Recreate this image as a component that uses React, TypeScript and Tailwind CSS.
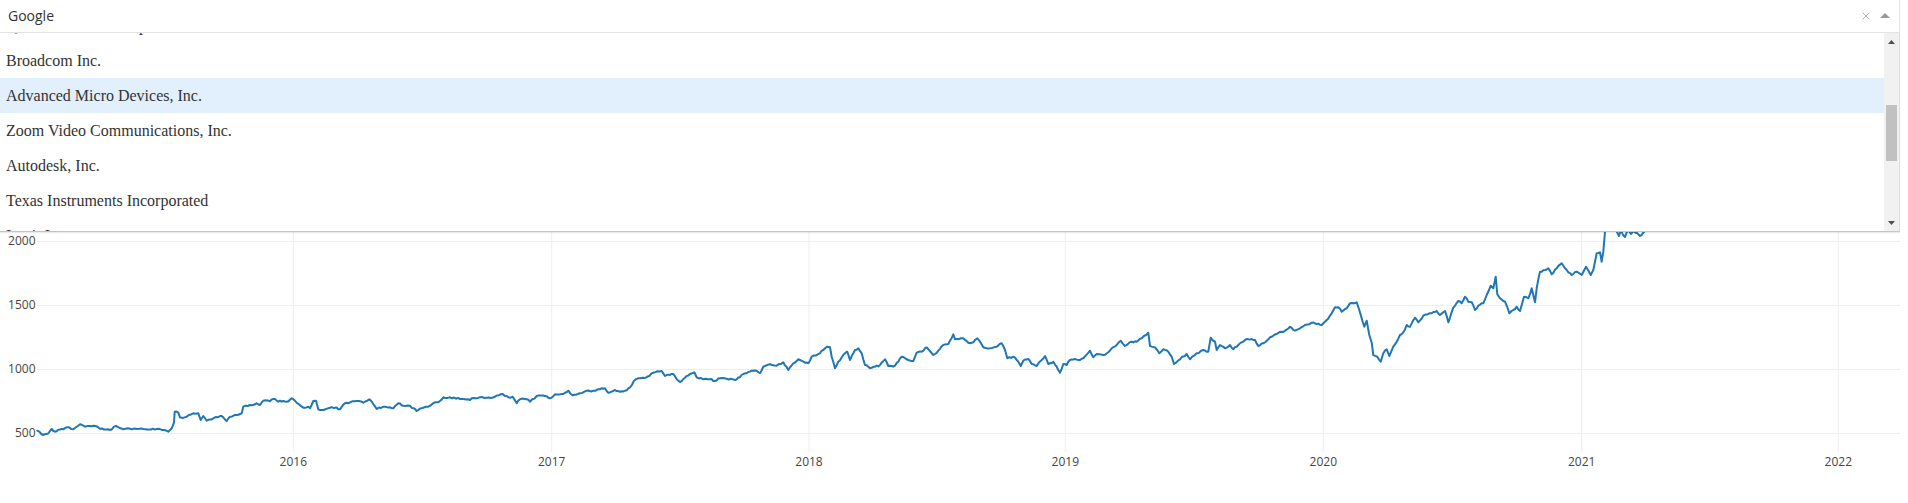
import React from "react";

const RAW: [number, number][] = [
  [37.3, 430.7], [43.3, 435], [48.3, 433.3], [51.7, 429], [55, 431.7], [58.3, 429.7], [63.3, 429.3], [66.7, 427.3],
  [73.3, 429.3], [80, 424.3], [85, 426.7], [93.3, 425.7], [100, 428.7], [110, 430], [116, 426], [123.3, 429.3],
  [130, 428.7], [143.3, 429], [156.7, 429], [161.7, 430], [168.3, 431.7], [171.7, 428.3], [174, 422.7], [174.7, 411.7],
  [178.3, 412.7], [180, 417.3], [186.7, 416.7], [193.3, 413.3], [198.3, 413.3], [200.7, 420], [203.3, 416], [206.7, 420.7],
  [213.3, 418.3], [220, 416], [223.3, 417.3], [226.7, 421], [230, 416.7], [236.7, 415], [241.7, 413.3], [243.3, 406.7],
  [250, 405], [256.7, 403.3], [260, 405], [263.3, 400.7], [270, 401.3], [273.3, 399], [278.3, 401.7], [283.3, 401],
  [286.7, 401.7], [291.7, 398.3], [296.7, 402.7], [303.3, 407.7], [308.3, 406.7], [310, 408.3], [313.3, 401], [316, 400.7],
  [318.3, 409.3], [323.3, 410], [330, 407.7], [335, 407.7], [340, 409.3], [345, 403.3], [350, 402.3], [356.7, 401],
  [363.3, 402.7], [369.3, 399.3], [373.3, 404], [376.7, 409], [383.3, 406.7], [390, 407.3], [393.3, 408.3], [398.3, 403.3],
  [403.3, 405.7], [410, 405.7], [416.7, 411], [421.7, 408.3], [428.3, 406.7], [435, 402.3], [438.3, 402.3], [443.3, 397.3],
  [450, 397.3], [460, 399], [470, 400], [471.7, 398.3], [480, 397.3], [486.7, 397.7], [495, 396.7],
  [502.7, 394], [508.3, 397.3], [512.7, 396.7], [516.7, 403.3], [520, 399.3], [526.7, 399.3], [530, 401.7], [536.7, 396],
  [545, 396], [550, 398.3], [555, 394.3], [563.3, 394], [568.3, 390.7], [572.7, 395.3], [580, 393.3], [586.7, 390.7],
  [593.3, 390.7], [600, 389.3], [605, 388.3], [608.3, 392.7], [615, 390], [620, 391.7], [625, 390.7], [630, 387.3],
  [634, 380.7], [638.3, 378.3], [645, 378], [649.3, 376], [653.3, 372.7], [661.7, 371], [665, 376], [670, 375],
  [673.3, 374], [676.7, 379.3], [680, 382], [685, 377.7], [690, 374], [694.3, 372.3], [696.7, 377.3], [703.3, 379.3],
  [710, 379.3], [715, 381], [720, 378.3], [726.7, 378.7], [735, 380], [740, 377.3], [743.3, 374], [748.3, 372],
  [753.3, 370.7], [756.7, 370.7], [760, 373.3], [763.3, 366.7], [770, 364.3], [776.7, 365.7], [783.3, 362.3], [788.3, 370],
  [793.3, 363.3], [798.3, 359.3], [805, 362.7], [808.3, 363.3], [811.7, 356.7], [818.3, 354], [823.3, 350], [827.3, 346.7],
  [830, 347.3], [831.7, 356.7], [835, 368.3], [838.3, 361.7], [843.3, 355], [847.3, 351.7], [850, 360], [855, 350],
  [858.3, 348.3], [861.7, 353.3], [865, 365], [870, 368.3], [875, 366.7], [880, 365], [885, 359.3], [888.3, 366],
  [893.3, 366.7], [898.3, 361.7], [901.7, 356.7], [906.7, 359.3], [913.3, 361], [916.7, 352.7], [921.7, 351.7], [926.7, 347.3],
  [933.3, 355], [938.3, 350.7], [943.3, 345], [948.3, 344], [953.3, 334.3], [955, 339.3],
  [963.3, 338.3], [968.3, 342.7], [973.3, 342.3], [977.3, 338.3], [983.3, 347.3], [990, 348.3], [996.7, 346.7], [1001.7, 343.3],
  [1005, 350], [1007.3, 358.3], [1013.3, 356.7], [1016.7, 360], [1020.7, 366], [1023.3, 360.7], [1028.3, 359], [1031.7, 364],
  [1036.7, 366], [1041.7, 360], [1045, 356], [1048.3, 364], [1053.3, 361.7], [1056.7, 366.7], [1060, 372.7], [1063.3, 364],
  [1066.7, 365], [1070, 360], [1075, 359], [1078.3, 360], [1083.3, 358.3], [1090, 350.7], [1093.3, 357.3], [1096.7, 354],
  [1103.3, 355], [1108.3, 352.3], [1111.7, 348.3], [1116.7, 345], [1120.7, 340.7], [1125, 346], [1131.7, 341.7], [1136.7, 341.7],
  [1141.7, 338.3], [1148.3, 332.7], [1150, 346], [1155, 347.3], [1159.3, 353.3], [1163.3, 349.3], [1168.3, 351.7], [1171.7, 356.7],
  [1174, 364], [1180, 359.3], [1186.7, 354], [1190, 359.3], [1196.7, 353.3], [1203.3, 350], [1208.3, 351.7], [1210.7, 337.7],
  [1215, 341.7], [1216.7, 350], [1220, 345], [1225, 348.3], [1230, 345], [1233.3, 349.3], [1238.3, 345], [1245, 340],
  [1251.7, 339], [1255, 340], [1258.3, 346], [1263.3, 343.3], [1270, 337.3], [1276.7, 334], [1281.7, 331.7], [1285, 330.7],
  [1290, 326.7], [1295, 330.7], [1300, 328.3], [1305, 325], [1311.7, 322.7], [1316.7, 324], [1321.7, 325], [1326.7, 320],
  [1331.7, 313.3], [1335, 307.3], [1338.3, 307.3], [1341.7, 311.7], [1346.7, 308.3], [1350, 303.3], [1356.7, 302.3], [1359.3, 310],
  [1362.7, 321.7], [1364.3, 326.7], [1366.7, 320.7], [1369.3, 335], [1371.7, 342.7], [1373.3, 355], [1377.3, 356.7], [1380.7, 361.7],
  [1383.3, 353.3], [1386.7, 349.3], [1389.3, 356], [1393.3, 346.7], [1396.7, 341.7],
  [1400, 335], [1403.3, 332.3], [1406.7, 325], [1410, 326.7], [1415, 317.7], [1418.3, 322.3], [1423.3, 315.7], [1431.7, 313.3],
  [1436.7, 311], [1440, 315], [1445, 311], [1448.3, 322.3], [1453.3, 307.7], [1458.3, 301], [1461.7, 303.3], [1465, 296.7],
  [1468.3, 301.7], [1471.7, 302.3], [1475, 310], [1478.3, 305.7], [1483.3, 303.3], [1486.7, 295], [1490.7, 285.7], [1493.3, 288.3],
  [1495.7, 276.7], [1497.3, 294.3], [1500, 298.3], [1505, 301.7], [1509.3, 313.3], [1513.3, 310], [1516.7, 306.7], [1520, 311],
  [1524, 296.7], [1528.3, 298.3], [1531.7, 288.3], [1535, 302.3], [1536.7, 288.3], [1540, 271.7], [1545, 270], [1548.3, 268.3],
  [1551.7, 274.3], [1556.7, 268.3], [1561.7, 263.3], [1566.7, 270], [1571.7, 275], [1576.7, 271.7], [1581.7, 275], [1586, 266.7],
  [1590.7, 275], [1593.3, 270], [1596.7, 253.3], [1600, 252.3], [1601.7, 261.7], [1603.3, 251.7], [1605, 231.7], [1607, 222],
  [1610, 214], [1614, 222], [1617, 232], [1619, 236], [1621, 230], [1623, 235], [1625, 237], [1628, 230], [1631, 234],
  [1634, 231], [1637, 233], [1640, 236], [1643, 233], [1645, 231], [1647, 226],
];

function buildPoints(): string {
  let seed = 987654;
  const rnd = () => {
    seed = (seed * 1103515245 + 12345) & 0x7fffffff;
    return seed / 0x7fffffff;
  };
  const pts: string[] = [];
  for (let i = 0; i < RAW.length - 1; i++) {
    const [x0, y0] = RAW[i];
    const [x1, y1] = RAW[i + 1];
    const n = Math.max(1, Math.round((x1 - x0) / 2));
    for (let k = 0; k < n; k++) {
      const t = k / n;
      const x = x0 + (x1 - x0) * t;
      let y = y0 + (y1 - y0) * t;
      if (k > 0) y += (rnd() - 0.5) * 1.6;
      pts.push(`${x.toFixed(1)},${y.toFixed(1)}`);
    }
  }
  const last = RAW[RAW.length - 1];
  pts.push(`${last[0]},${last[1]}`);
  return pts.join(" ");
}

const YEARS: [string, number][] = [
  ["2016", 293.3],
  ["2017", 551.7],
  ["2018", 809],
  ["2019", 1065.3],
  ["2020", 1323.3],
  ["2021", 1581.7],
  ["2022", 1838.3],
];

const YTICKS: [string, number][] = [
  ["2000", 241],
  ["1500", 305],
  ["1000", 369],
  ["500", 433],
];

const OPTIONS = [
  "QUALCOMM Incorporated",
  "Broadcom Inc.",
  "Advanced Micro Devices, Inc.",
  "Zoom Video Communications, Inc.",
  "Autodesk, Inc.",
  "Texas Instruments Incorporated",
  "Intuit Inc.",
];

function Chart() {
  const points = buildPoints();
  return (
    <svg width={1900} height={437} viewBox="0 33 1900 437" className="block">
      {YTICKS.map(([, y]) => (
        <line key={"h" + y} x1={37} x2={1900} y1={y + 0.5} y2={y + 0.5} stroke="#eeeeee" strokeWidth={1} />
      ))}
      {YEARS.map(([, x]) => (
        <line key={"v" + x} x1={x} x2={x} y1={33} y2={452} stroke="#eeeeee" strokeWidth={1} />
      ))}
      <polyline points={points} fill="none" stroke="#1f77b4" strokeWidth={2} strokeLinejoin="round" strokeLinecap="round" />
      <g style={{ fontFamily: '"Open Sans", Verdana, Arial, sans-serif' }} fontSize={12} fill="#444444">
        {YTICKS.map(([t, y]) => (
          <text key={"yl" + t} x={35.5} y={y + 4.3} textAnchor="end">
            {t}
          </text>
        ))}
        {YEARS.map(([t, x]) => (
          <text key={"xl" + t} x={x} y={466} textAnchor="middle">
            {t}
          </text>
        ))}
      </g>
    </svg>
  );
}

export default function App() {
  return (
    <div className="relative w-[1900px] bg-white">
      <div className="flex h-[33px] w-[1900px] items-center border-b border-r border-[#e3e3e3] bg-white pl-[8px] pr-[9px]">
        <span className="flex-1 pb-[2px] font-['Open_Sans',Arial,sans-serif] text-[14px] text-[#333333]">Google</span>
        <svg width="8" height="8" viewBox="0 0 8 8" className="mr-[10px] mb-[1px]">
          <path d="M0.5 0.5 L7.5 7.5 M7.5 0.5 L0.5 7.5" stroke="#b5b5b5" strokeWidth="1" fill="none" />
        </svg>
        <svg width="10" height="5" viewBox="0 0 10 5" className="mb-[2px]">
          <path d="M0 5 L5 0 L10 5 Z" fill="#999999" />
        </svg>
      </div>

      <div className="absolute left-0 top-[33px] z-10 flex h-[199px] w-[1900px] border-b border-r border-b-[#c4c4c4] border-r-[#dddddd] bg-white shadow-[0_1px_1px_rgba(0,0,0,0.08)]">
        <div className="flex-1 overflow-hidden">
          <div className="mt-[-25px] flex flex-col font-['Liberation_Serif','Times_New_Roman',serif] text-[16px] text-[#333333]">
            {OPTIONS.map((o, i) => (
              <div
                key={o}
                className={
                  i === 2
                    ? "flex h-[35px] items-center bg-[#e2effd] pl-[6px]"
                    : "flex h-[35px] items-center pl-[6px]"
                }
              >
                {o}
              </div>
            ))}
          </div>
        </div>
        <div className="flex w-[15px] flex-col bg-[#f1f1f1]">
          <div className="flex h-[17px] items-center justify-center">
            <svg width="7" height="4" viewBox="0 0 7 4">
              <path d="M0 4 L3.5 0 L7 4 Z" fill="#505050" />
            </svg>
          </div>
          <div className="mx-[2px] mt-[55px] h-[56px] bg-[#c1c1c1]" />
          <div className="flex-1" />
          <div className="flex h-[17px] items-center justify-center">
            <svg width="7" height="4" viewBox="0 0 7 4">
              <path d="M0 0 L3.5 4 L7 0 Z" fill="#505050" />
            </svg>
          </div>
        </div>
      </div>

      <Chart />
    </div>
  );
}
